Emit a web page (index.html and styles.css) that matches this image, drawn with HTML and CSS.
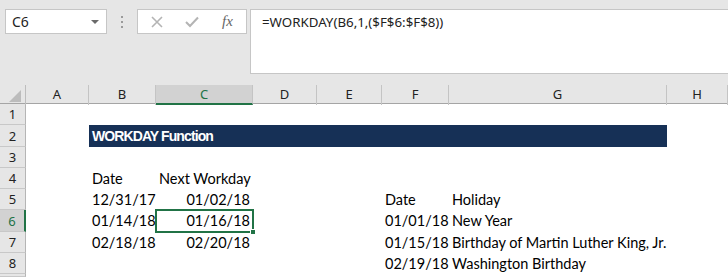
FILE: index.html
```html
<!DOCTYPE html>
<html lang="en">
<head>
    <meta charset="UTF-8">
    <meta name="viewport" content="width=device-width, initial-scale=1.0">
    <title>WORKDAY Function</title>
    <link rel="stylesheet" href="styles.css">
</head>
<body>
    <div class="toolbar">
        <div class="name-box">
            <span>C6</span>
            <span class="caret"></span>
        </div>
        <div class="grip">
            <svg width="4" height="12" viewBox="0 0 4 12"><rect x="1" y="0" width="2" height="2" fill="#9a9a9a"/><rect x="1" y="5" width="2" height="2" fill="#9a9a9a"/><rect x="1" y="10" width="2" height="2" fill="#9a9a9a"/></svg>
        </div>
        <div class="fx-buttons">
            <svg class="fx-icon" width="12" height="12" viewBox="0 0 12 12"><path d="M1 1 L11 11 M11 1 L1 11" stroke="#b4b4b4" stroke-width="1.6" fill="none"/></svg>
            <svg class="fx-icon" width="14" height="12" viewBox="0 0 14 12"><path d="M1 6 L5 10 L13 1.5" stroke="#b4b4b4" stroke-width="2" fill="none"/></svg>
            <span class="fx-label">fx</span>
        </div>
        <div class="formula-input">=WORKDAY(B6,1,($F$6:$F$8))</div>
    </div>

    <div class="sheet">
        <div class="row col-head">
            <div class="corner"><span class="corner-tri"></span></div>
            <div class="col-label">A</div>
            <div class="col-label">B</div>
            <div class="col-label active">C</div>
            <div class="col-label">D</div>
            <div class="col-label">E</div>
            <div class="col-label">F</div>
            <div class="col-label">G</div>
            <div class="col-label">H</div>
        </div>

        <div class="row r21">
            <div class="row-label">1</div>
        </div>

        <div class="row r22">
            <div class="row-label">2</div>
            <div class="cell"></div>
            <div class="cell title">WORKDAY Function</div>
        </div>

        <div class="row r21">
            <div class="row-label">3</div>
        </div>

        <div class="row r21">
            <div class="row-label">4</div>
            <div class="cell"></div>
            <div class="cell">Date</div>
            <div class="cell">Next Workday</div>
        </div>

        <div class="row r21">
            <div class="row-label">5</div>
            <div class="cell"></div>
            <div class="cell num">12/31/17</div>
            <div class="cell num">01/02/18</div>
            <div class="cell"></div>
            <div class="cell"></div>
            <div class="cell">Date</div>
            <div class="cell">Holiday</div>
        </div>

        <div class="row r22">
            <div class="row-label active">6</div>
            <div class="cell"></div>
            <div class="cell num">01/14/18</div>
            <div class="cell num selected">01/16/18<span class="fill-handle"></span></div>
            <div class="cell"></div>
            <div class="cell"></div>
            <div class="cell num">01/01/18</div>
            <div class="cell">New Year</div>
        </div>

        <div class="row r21">
            <div class="row-label">7</div>
            <div class="cell"></div>
            <div class="cell num">02/18/18</div>
            <div class="cell num">02/20/18</div>
            <div class="cell"></div>
            <div class="cell"></div>
            <div class="cell num">01/15/18</div>
            <div class="cell">Birthday of Martin Luther King, Jr.</div>
        </div>

        <div class="row r21">
            <div class="row-label">8</div>
            <div class="cell"></div>
            <div class="cell"></div>
            <div class="cell"></div>
            <div class="cell"></div>
            <div class="cell"></div>
            <div class="cell num">02/19/18</div>
            <div class="cell">Washington Birthday</div>
        </div>

        <div class="row row-end">
            <div class="row-label"></div>
        </div>
    </div>
</body>
</html>
```

FILE: styles.css
```css
/* Basic reset */
* {
    margin: 0;
    padding: 0;
    box-sizing: border-box;
}

body {
    font-family: "Noto Sans", Arial, sans-serif;
    background-color: #e6e6e6;
    width: 728px;
    height: 277px;
    overflow: hidden;
}

/* Formula bar */
.toolbar {
    display: flex;
    align-items: flex-start;
    height: 85px;
    padding: 9px 0 0 5px;
}

.name-box {
    width: 102px;
    height: 25px;
    background-color: #fff;
    border: 1px solid #c6c6c6;
    display: flex;
    align-items: center;
    justify-content: space-between;
    padding: 0 7px 0 6px;
    font-size: 14px;
    color: #222;
}

.caret {
    width: 0;
    height: 0;
    border-left: 4px solid transparent;
    border-right: 4px solid transparent;
    border-top: 4px solid #6a6a6a;
}

.grip {
    width: 30px;
    height: 25px;
    display: flex;
    align-items: center;
    justify-content: center;
}

.fx-buttons {
    width: 110px;
    height: 25px;
    background-color: #fff;
    border: 1px solid #c6c6c6;
    display: flex;
    align-items: center;
    padding-left: 13px;
    gap: 22px;
}

.fx-label {
    font-family: "Liberation Serif", serif;
    font-style: italic;
    font-size: 15px;
    color: #666;
    margin-left: 1px;
}

.formula-input {
    flex: 1;
    height: 65px;
    margin-left: 3px;
    margin-right: -2px;
    background-color: #fff;
    border: 1px solid #c6c6c6;
    padding: 3px 0 0 11px;
    font-size: 13.3px;
    color: #222;
}

/* Sheet grid */
.sheet {
    background-color: #fff;
}

.row {
    display: grid;
    grid-template-columns: 26px 63px 67px 97px 64px 65px 67px 218px 61px;
    height: 21px;
}

.r21 {
    height: 21px;
}

.r22 {
    height: 22px;
}

.row-end {
    height: 3px;
}

.col-head {
    height: 19px;
    background-color: #e6e6e6;
    border-bottom: 1px solid #a5a5a5;
}

.corner {
    position: relative;
    border-right: 1px solid #bdbdbd;
}

.corner-tri {
    position: absolute;
    right: 4px;
    bottom: 3px;
    width: 0;
    height: 0;
    border-left: 12px solid transparent;
    border-bottom: 12px solid #bcbcbc;
}

.col-label {
    border-right: 1px solid #c4c4c4;
    font-size: 13px;
    line-height: 18px;
    text-align: center;
    color: #222;
}

.col-label.active {
    background-color: #d2d2d2;
    color: #217346;
    border-bottom: 2px solid #217346;
}

.row-label {
    grid-column: 1;
    background-color: #e6e6e6;
    border-right: 1px solid #b5b5b5;
    border-bottom: 1px solid #c8c8c8;
    font-size: 13px;
    text-align: center;
    display: flex;
    align-items: center;
    justify-content: center;
    color: #222;
}

.row-label.active {
    background-color: #d2d2d2;
    color: #217346;
    border-right: 2px solid #217346;
}

/* Cells */
.cell {
    font-family: Lato, "Liberation Sans", sans-serif;
    font-size: 14.5px;
    line-height: 21px;
    padding: 0 3px;
    white-space: nowrap;
    color: #000;
}

.r22 .cell {
    line-height: 22px;
}

.num {
    text-align: right;
}

.title {
    grid-column: 3 / span 6;
    background-color: #163056;
    color: #fff;
    font-family: "Liberation Sans", Arial, sans-serif;
    font-weight: bold;
    font-size: 14px;
    letter-spacing: -0.9px;
}

.selected {
    position: relative;
    outline: 2px solid #217346;
    outline-offset: -1px;
}

.fill-handle {
    position: absolute;
    right: -3px;
    bottom: -3px;
    width: 6px;
    height: 6px;
    background-color: #217346;
    border: 1px solid #fff;
}
```
